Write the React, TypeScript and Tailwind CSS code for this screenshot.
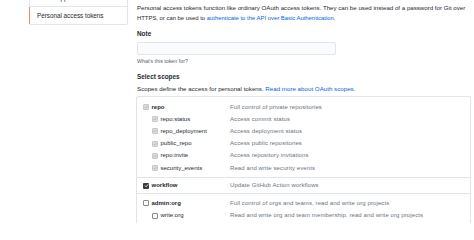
import React from "react";

type Cb = "disabled" | "checked" | "empty";

function Box({ kind }: { kind: Cb }) {
  if (kind === "empty") {
    return <span className="inline-block w-[6px] h-[6px] border border-[#8a8a8a] bg-white rounded-[1px] shrink-0" />;
  }
  if (kind === "checked") {
    return (
      <span className="inline-flex w-[6px] h-[6px] bg-[#3b3b3b] rounded-[1px] shrink-0 items-center justify-center">
        <svg width="5" height="5" viewBox="0 0 10 10">
          <path d="M2 5.2 L4.2 7.4 L8.2 2.8" stroke="#fff" strokeWidth="1.8" fill="none" />
        </svg>
      </span>
    );
  }
  return (
    <span className="inline-flex w-[6px] h-[6px] bg-[#dcdcdc] border border-[#c8c8c8] rounded-[1px] shrink-0 items-center justify-center">
      <svg width="4" height="4" viewBox="0 0 10 10">
        <path d="M2 5.2 L4.2 7.4 L8.2 2.8" stroke="#a8a8a8" strokeWidth="2" fill="none" />
      </svg>
    </span>
  );
}

function Row({ name, desc, kind, sub, bold }: { name: string; desc: string; kind: Cb; sub?: boolean; bold?: boolean }) {
  return (
    <div className="flex items-center h-[12.2px] whitespace-nowrap">
      <div className={`flex items-center w-[93px] shrink-0 ${sub ? "pl-[15px]" : "pl-[6px]"}`}>
        <Box kind={kind} />
        <span className={`ml-[2.5px] text-[#24292e] ${bold ? "font-semibold" : ""}`}>{name}</span>
      </div>
      <div className="text-[#6a737d] tracking-[0.1px]">{desc}</div>
    </div>
  );
}

export default function App() {
  return (
    <div
      className="w-[474px] h-[223px] bg-white overflow-hidden flex pl-[29px]"
      style={{ fontFamily: '"Liberation Sans", Arial, sans-serif' }}
    >
      <div className="w-[99px] shrink-0 -mt-[12px]">
        <div className="border border-[#e1e4e8] rounded-b-[2px] text-[6.3px] text-[#24292e]">
          <div className="h-[18px] flex items-center pl-[7px] border-b border-[#e1e4e8]">OAuth Apps</div>
          <div className="h-[17px] flex items-center pl-[7px] border-l border-l-[#f9826c] -ml-px">Personal access tokens</div>
        </div>
      </div>
      <div className="ml-[9px] w-[334px] shrink-0 text-[6.4px] text-[#24292e]">
        <div className="mt-[3px] leading-[10px] whitespace-nowrap">
          <div className="text-[6.15px]">
            Personal access tokens function like ordinary OAuth access tokens. They can be used instead of a password for Git over
          </div>
          <div className="text-[5.9px]">
            HTTPS, or can be used to <span className="text-[#0366d6]">authenticate to the API over Basic Authentication</span>.
          </div>
        </div>
        <div className="mt-[6px] font-semibold leading-[10px]">Note</div>
        <div className="mt-[3px] w-[199px] h-[13px] border border-[#e1e4e8] bg-[#fafbfc] rounded-[2px]" />
        <div className="mt-[2px] text-[5.3px] leading-[8px] text-[#586069]">What’s this token for?</div>
        <div className="mt-[7px] font-semibold leading-[10px]">Select scopes</div>
        <div className="mt-[2px] leading-[10px] text-[6.2px] whitespace-nowrap">
          Scopes define the access for personal tokens. <span className="text-[#0366d6]">Read more about OAuth scopes.</span>
        </div>
        <div className="mt-[2px] -ml-[1px] border border-[#e1e4e8] rounded-[2px] text-[6px]">
          <div className="pt-[4px] pb-[3px] border-b border-[#e1e4e8]">
            <Row name="repo" desc="Full control of private repositories" kind="disabled" bold />
            <Row name="repo:status" desc="Access commit status" kind="disabled" sub />
            <Row name="repo_deployment" desc="Access deployment status" kind="disabled" sub />
            <Row name="public_repo" desc="Access public repositories" kind="disabled" sub />
            <Row name="repo:invite" desc="Access repository invitations" kind="disabled" sub />
            <Row name="security_events" desc="Read and write security events" kind="disabled" sub />
          </div>
          <div className="py-[1.5px] border-b border-[#e1e4e8]">
            <Row name="workflow" desc="Update GitHub Action workflows" kind="checked" bold />
          </div>
          <div className="py-[3px]">
            <Row name="admin:org" desc="Full control of orgs and teams, read and write org projects" kind="empty" bold />
            <Row name="write:org" desc="Read and write org and team membership, read and write org projects" kind="empty" sub />
            <Row name="read:org" desc="Read org and team membership, read org projects" kind="empty" sub />
          </div>
        </div>
      </div>
    </div>
  );
}
